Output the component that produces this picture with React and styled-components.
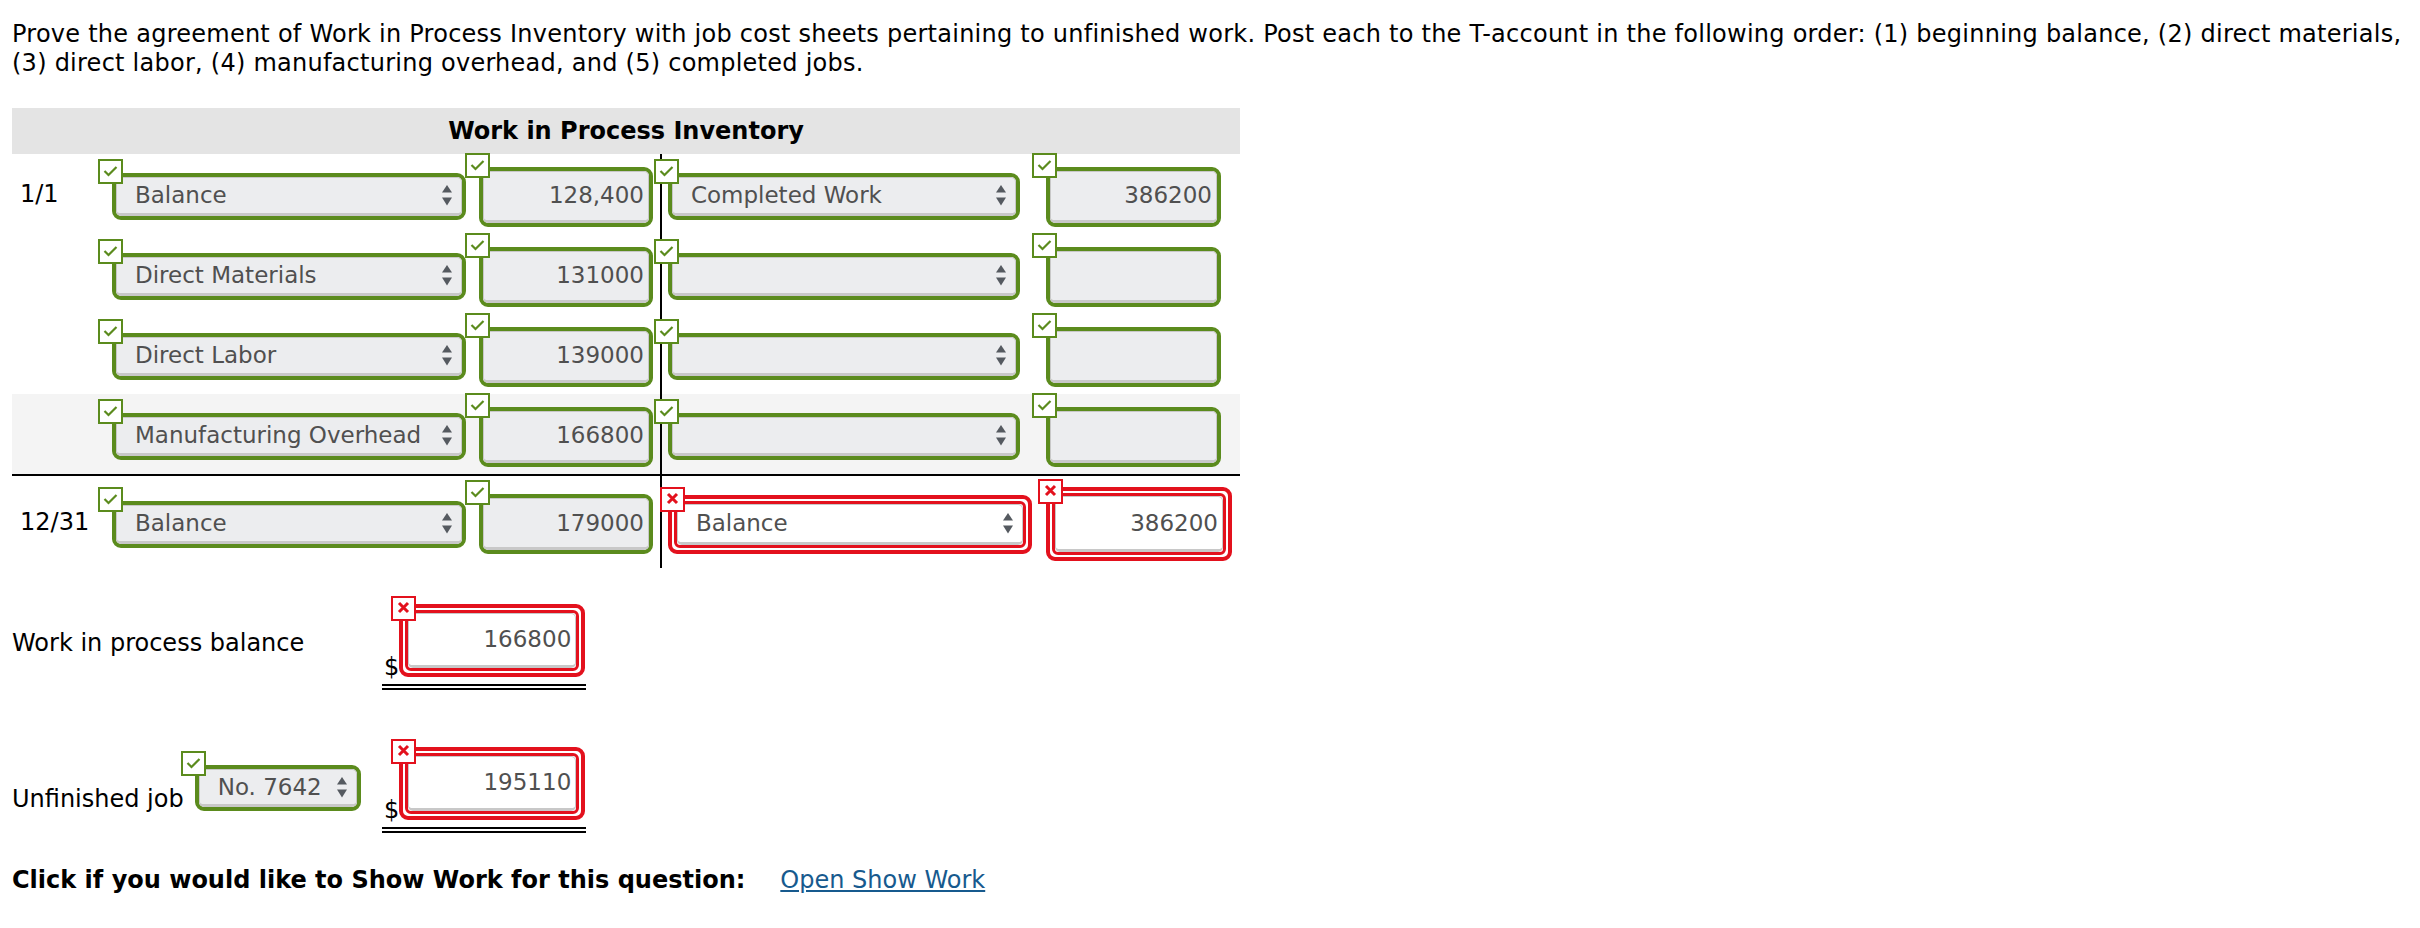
import React from "react";
import styled, { createGlobalStyle } from "styled-components";

const GREEN = "#5b8b1d";
const RED = "#e3111d";

const GlobalStyle = createGlobalStyle`
  body {
    margin: 0;
    background: #fff;
    color: #000;
    font-family: "DejaVu Sans", Verdana, sans-serif;
    font-size: 24px;
  }
`;

const Page = styled.div`
  padding: 20px 12px 0 12px;
`;

const Prompt = styled.p`
  margin: 0;
  line-height: 29px;
  letter-spacing: 0.25px;
`;

const TAccount = styled.div`
  width: 1228px;
  margin-top: 30px;
`;

const Header = styled.div`
  height: 46px;
  line-height: 46px;
  background: #e4e4e4;
  text-align: center;
  font-weight: bold;
`;

const Row = styled.div`
  display: flex;
  box-sizing: border-box;
  height: ${(p) => p.$h}px;
  padding-top: ${(p) => p.$pt}px;
  background: ${(p) => (p.$shade ? "#f4f4f4" : "transparent")};
  border-top: ${(p) => (p.$rule ? "2px solid #000" : "none")};
`;

const Side = styled.div`
  display: flex;
  align-items: center;
  width: ${(p) => p.$w}px;
  border-left: ${(p) => (p.$rule ? "2px solid #000" : "none")};
  margin-top: ${(p) => -p.$pt}px;
  padding-top: ${(p) => p.$pt}px;
`;

const DateCell = styled.div`
  width: 100px;
  box-sizing: border-box;
  padding-left: 8px;
  line-height: 29px;
  margin-top: -4px;
`;

const Slot = styled.div`
  position: relative;
  flex: none;
  margin-left: ${(p) => p.$ml || 0}px;
  margin-top: ${(p) => p.$mt || 0}px;
`;

const Badge = styled.div`
  position: absolute;
  top: ${(p) => (p.$bad ? -8 : -14)}px;
  left: ${(p) => (p.$bad ? -8 : -14)}px;
  width: 25px;
  height: 25px;
  box-sizing: border-box;
  border: 2px solid ${(p) => (p.$bad ? RED : GREEN)};
  background: #fff;
  z-index: 2;
  svg {
    display: block;
  }
`;

const Frame = styled.div`
  border: 4px solid ${(p) => (p.$bad ? RED : GREEN)};
  border-radius: 9px;
  padding: ${(p) => (p.$bad ? 2 : 0)}px;
  background: #fff;
`;

const Ring = styled.div`
  border: ${(p) => (p.$bad ? `3px solid ${RED}` : "none")};
  border-radius: 6px;
`;

const Field = styled.div`
  box-sizing: border-box;
  width: ${(p) => p.$w}px;
  height: ${(p) => p.$h}px;
  display: flex;
  align-items: center;
  justify-content: ${(p) => (p.$select ? "space-between" : "flex-end")};
  padding: ${(p) => (p.$select ? "0 9px 0 18px" : "0 4px 0 8px")};
  background: ${(p) => (p.$bad ? "#fff" : "#ecedef")};
  border: 1px solid #c8c8c8;
  border-bottom-width: 3px;
  border-radius: 5px;
  color: #505050;
  font-size: 23px;
  line-height: 1;
  white-space: nowrap;
`;

const Balance = styled.div`
  display: flex;
  margin-top: ${(p) => p.$mt}px;
`;

const LabelArea = styled.div`
  width: 370px;
  display: flex;
  align-items: flex-start;
`;

const Label = styled.div`
  line-height: 29px;
  margin-top: ${(p) => p.$mt}px;
`;

const AmountCell = styled.div`
  width: 204px;
  box-sizing: border-box;
  display: flex;
  align-items: flex-end;
  padding: 0 0 7px 2px;
  border-bottom: 6px double #000;
`;

const Dollar = styled.span`
  line-height: 24px;
  margin-bottom: -2px;
`;

const ShowWork = styled.div`
  margin-top: 33px;
  line-height: 29px;
  strong {
    font-weight: bold;
  }
`;

const Link = styled.a`
  margin-left: 35px;
  color: #175a8e;
  text-decoration: underline;
  cursor: pointer;
`;

const Arrows = () => (
  <svg width="10" height="21" viewBox="0 0 10 21">
    <path d="M5 0 L10 7.5 L0 7.5 Z" fill="#555a60" />
    <path d="M0 12.5 L10 12.5 L5 20.5 Z" fill="#555a60" />
  </svg>
);

const Mark = ({ bad }) => (
  <Badge $bad={bad}>
    {bad ? (
      <svg width="21" height="21" viewBox="0 0 21 21">
        <path d="M6 5 L15 14 M15 5 L6 14" stroke={RED} strokeWidth="3" />
      </svg>
    ) : (
      <svg width="21" height="21" viewBox="0 0 21 21">
        <path d="M4.5 10 L8.5 14 L16.5 6" stroke={GREEN} strokeWidth="2.2" fill="none" />
      </svg>
    )}
  </Badge>
);

const Box = ({ bad, w, h, select, ml, mt, children }) => (
  <Slot $ml={ml} $mt={mt}>
    <Mark bad={bad} />
    <Frame $bad={bad}>
      <Ring $bad={bad}>
        <Field $w={w} $h={h} $select={select} $bad={bad}>
          {select ? (
            <>
              <span>{children}</span>
              <Arrows />
            </>
          ) : (
            children
          )}
        </Field>
      </Ring>
    </Frame>
  </Slot>
);

const entries = [
  { date: "1/1", debit: "Balance", dAmt: "128,400", credit: "Completed Work", cAmt: "386200" },
  { debit: "Direct Materials", dAmt: "131000", credit: "", cAmt: "" },
  { debit: "Direct Labor", dAmt: "139000", credit: "", cAmt: "" },
  { debit: "Manufacturing Overhead", dAmt: "166800", credit: "", cAmt: "", shade: true },
];

const App = () => {
  return (
    <Page>
      <GlobalStyle />
      <Prompt>
        Prove the agreement of Work in Process Inventory with job cost sheets pertaining to
        unfinished work. Post each to the T-account in the following order: (1) beginning
        balance, (2) direct materials, (3) direct labor, (4) manufacturing overhead, and (5)
        completed jobs.
      </Prompt>

      <TAccount>
        <Header>Work in Process Inventory</Header>
        {entries.map((e, i) => (
          <Row key={i} $h={80} $pt={5} $shade={e.shade}>
            <Side $w={649} $pt={0}>
              <DateCell>{e.date}</DateCell>
              <Box select w={346} h={39}>{e.debit}</Box>
              <Box ml={13} w={166} h={52}>{e.dAmt}</Box>
            </Side>
            <Side $w={579} $rule $pt={5}>
              <Box select ml={6} w={344} h={39}>{e.credit}</Box>
              <Box ml={26} w={167} h={52}>{e.cAmt}</Box>
            </Side>
          </Row>
        ))}
        <Row $h={94} $pt={4} $rule>
          <Side $w={649} $pt={0}>
            <DateCell>12/31</DateCell>
            <Box select w={346} h={39}>Balance</Box>
            <Box ml={13} w={166} h={52}>179000</Box>
          </Side>
          <Side $w={579} $rule $pt={4}>
            <Box select bad ml={6} w={346} h={41}>Balance</Box>
            <Box bad ml={14} w={168} h={56}>386200</Box>
          </Side>
        </Row>
      </TAccount>

      <Balance $mt={36}>
        <LabelArea>
          <Label $mt={25}>Work in process balance</Label>
        </LabelArea>
        <AmountCell>
          <Dollar>$</Dollar>
          <Box bad w={168} h={55}>166800</Box>
        </AmountCell>
      </Balance>

      <Balance $mt={57}>
        <LabelArea>
          <Label $mt={38}>Unfinished job</Label>
          <Box select ml={11} mt={18} w={158} h={38}>No. 7642</Box>
        </LabelArea>
        <AmountCell>
          <Dollar>$</Dollar>
          <Box bad w={168} h={55}>195110</Box>
        </AmountCell>
      </Balance>

      <ShowWork>
        <strong>Click if you would like to Show Work for this question:</strong>
        <Link>Open Show Work</Link>
      </ShowWork>
    </Page>
  );
};

export default App;
